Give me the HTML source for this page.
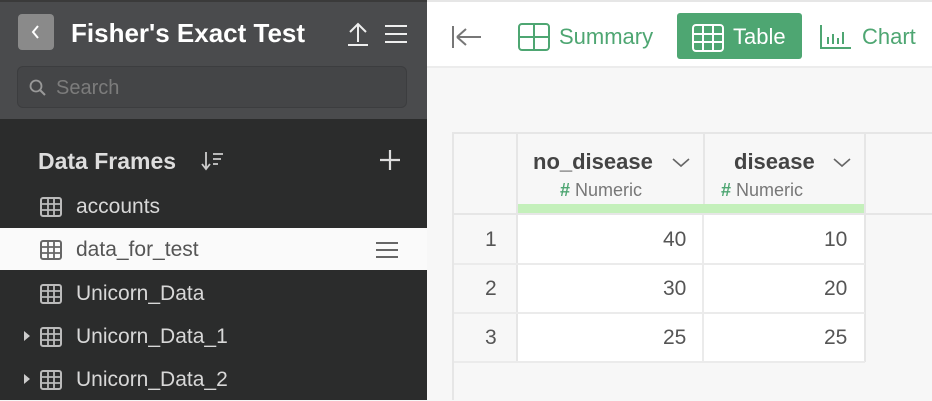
<!DOCTYPE html><html><head><style>
*{margin:0;padding:0;box-sizing:border-box}
body{width:932px;height:400px;overflow:hidden;font-family:"Liberation Sans",sans-serif;background:#f7f7f7;position:relative}
.sb{position:absolute;left:0;top:0;width:427px;height:400px;background:#2b2c2c}
.hd{position:absolute;left:0;top:0;width:427px;height:119px;background:#4a4b4d;border-top:2px solid #3a3a3a}
.abs{position:absolute}
.row{position:absolute;left:0;width:427px;height:43px;color:#d8d8d8;font-size:21px}
.row .t{position:absolute;left:76px;top:10px}
.row svg{position:absolute;left:40px;top:12px}
.tri{position:absolute;left:24px;top:16px;width:0;height:0;border-left:6px solid #ccc;border-top:5px solid transparent;border-bottom:5px solid transparent}
.tb{position:absolute;left:427px;top:0;width:505px;height:68px;background:#fff;border-bottom:2px solid #ececec;border-top:2px solid #e6e6e6}
.g{color:#4ea672}
</style></head><body>
<div class="sb">
<div class="hd">
 <div class="abs" style="left:18px;top:12px;width:36px;height:36px;background:#8a8a8a;border-radius:4px"><svg width="36" height="36"><path d="M20 12l-5 6 5 6" stroke="#fff" stroke-width="2" fill="none"/></svg></div>
 <div class="abs" style="left:71px;top:16px;color:#fff;font-size:26px;font-weight:bold">Fisher's Exact Test</div>
 <svg class="abs" style="left:346px;top:20px" width="24" height="26"><path d="M12 2v18M4 10l8-8 8 8M2 23h20" stroke="#eee" stroke-width="2" fill="none"/></svg>
 <svg class="abs" style="left:385px;top:22px" width="22" height="22"><path d="M0 2h22M0 10h22M0 18h22" stroke="#eee" stroke-width="2"/></svg>
 <div class="abs" style="left:17px;top:64px;width:390px;height:42px;background:#444547;border:1px solid #3c3d3f;border-radius:6px"></div>
 <svg class="abs" style="left:29px;top:77px" width="18" height="18"><circle cx="7" cy="7" r="5.5" stroke="#999" stroke-width="1.8" fill="none"/><path d="M11 11l5 5" stroke="#999" stroke-width="2"/></svg>
 <div class="abs" style="left:56px;top:75px;color:#7c7c7c;font-size:20px">Search</div>
</div>
<div class="abs" style="left:38px;top:148px;color:#ddd;font-size:23px;font-weight:bold">Data Frames</div>
<svg class="abs" style="left:200px;top:150px" width="26" height="22"><path d="M6 2v16M2 14l4 5 4-5M13 4h10M13 9h8M13 14h5" stroke="#ccc" stroke-width="1.8" fill="none"/></svg>
<svg class="abs" style="left:379px;top:149px" width="22" height="22"><path d="M11 1v20M1 11h20" stroke="#ddd" stroke-width="2.2"/></svg>
<div class="row" style="top:185px"><svg width="22" height="20"><rect x="1" y="1" width="20" height="18" rx="2" stroke="#bbb" fill="none" stroke-width="2"/><path d="M1 7h20M1 13h20M8 1v18M14 1v18" stroke="#bbb" stroke-width="1.8"/></svg><span class="t">accounts</span></div>
<div class="row" style="top:228px;background:#fafafa;color:#555;height:42px"><svg width="22" height="20"><rect x="1" y="1" width="20" height="18" rx="2" stroke="#666" fill="none" stroke-width="2"/><path d="M1 7h20M1 13h20M8 1v18M14 1v18" stroke="#666" stroke-width="1.8"/></svg><span class="t">data_for_test</span><svg style="left:376px;top:13px" width="22" height="18"><path d="M0 2h22M0 9h22M0 16h22" stroke="#666" stroke-width="2"/></svg></div>
<div class="row" style="top:272px"><svg width="22" height="20"><rect x="1" y="1" width="20" height="18" rx="2" stroke="#bbb" fill="none" stroke-width="2"/><path d="M1 7h20M1 13h20M8 1v18M14 1v18" stroke="#bbb" stroke-width="1.8"/></svg><span class="t">Unicorn_Data</span></div>
<div class="row" style="top:315px"><div class="tri"></div><svg width="22" height="20"><rect x="1" y="1" width="20" height="18" rx="2" stroke="#bbb" fill="none" stroke-width="2"/><path d="M1 7h20M1 13h20M8 1v18M14 1v18" stroke="#bbb" stroke-width="1.8"/></svg><span class="t">Unicorn_Data_1</span></div>
<div class="row" style="top:358px"><div class="tri"></div><svg width="22" height="20"><rect x="1" y="1" width="20" height="18" rx="2" stroke="#bbb" fill="none" stroke-width="2"/><path d="M1 7h20M1 13h20M8 1v18M14 1v18" stroke="#bbb" stroke-width="1.8"/></svg><span class="t">Unicorn_Data_2</span></div>
</div>
<div class="tb">
 <svg class="abs" style="left:24px;top:22px" width="32" height="26"><path d="M2 2v22M6 13h24M6 13l9-8M6 13l9 8" stroke="#777" stroke-width="2" fill="none"/></svg>
 <svg class="abs" style="left:91px;top:21px" width="32" height="28"><rect x="1" y="1" width="30" height="26" rx="3" stroke="#4ea672" stroke-width="2" fill="none"/><path d="M1 14h30M16 1v26" stroke="#4ea672" stroke-width="2"/></svg>
 <div class="abs g" style="left:132px;top:22px;font-size:22px">Summary</div>
 <div class="abs" style="left:250px;top:11px;width:125px;height:46px;background:#4ea672;border-radius:3px"></div>
 <svg class="abs" style="left:265px;top:22px" width="32" height="28"><rect x="1" y="1" width="30" height="26" rx="3" stroke="#fff" stroke-width="2" fill="none"/><path d="M1 10h30M1 18h30M11 1v26M21 1v26" stroke="#fff" stroke-width="2"/></svg>
 <div class="abs" style="left:306px;top:22px;font-size:22px;color:#fff">Table</div>
 <svg class="abs" style="left:393px;top:22px" width="32" height="26"><path d="M1 1v23h30M8 20v-7M13 20v-10M18 20v-6M23 20v-12" stroke="#4ea672" stroke-width="2" fill="none"/></svg>
 <div class="abs g" style="left:435px;top:22px;font-size:22px">Chart</div>
</div>
<div class="abs" style="left:452px;top:132px;width:2px;height:268px;background:#e6e6e6"></div>
<div class="abs" style="left:452px;top:132px;width:480px;height:2px;background:#e6e6e6"></div>
<div class="abs" style="left:452px;top:213px;width:480px;height:2px;background:#e6e6e6"></div>
<div class="abs" style="left:516px;top:132px;width:2px;height:230px;background:#e6e6e6"></div>
<div class="abs" style="left:703px;top:132px;width:2px;height:230px;background:#e6e6e6"></div>
<div class="abs" style="left:864px;top:132px;width:2px;height:230px;background:#e6e6e6"></div>
<div class="abs" style="left:518px;top:204px;width:346px;height:9px;background:#c4f0bb"></div>
<div class="abs" style="left:533px;top:149px;font-size:22px;font-weight:bold;color:#444">no_disease</div>
<div class="abs" style="left:734px;top:149px;font-size:22px;font-weight:bold;color:#444">disease</div>
<svg class="abs" style="left:672px;top:158px" width="18" height="10"><path d="M1 1l8 7 8-7" stroke="#666" stroke-width="1.6" fill="none"/></svg>
<svg class="abs" style="left:833px;top:158px" width="18" height="10"><path d="M1 1l8 7 8-7" stroke="#666" stroke-width="1.6" fill="none"/></svg>
<div class="abs" style="left:560px;top:180px;font-size:18px;color:#777"><b class="g">#</b> Numeric</div>
<div class="abs" style="left:721px;top:180px;font-size:18px;color:#777"><b class="g">#</b> Numeric</div>
<div class="abs" style="left:518px;top:215px;width:346px;height:147px;background:#fff"></div>
<div class="abs" style="left:518px;top:215px;width:186px;height:147px;border-right:2px solid #ebebeb"></div>
<div class="abs" style="left:454px;top:263px;width:411px;height:2px;background:#ebebeb"></div>
<div class="abs" style="left:454px;top:312px;width:411px;height:2px;background:#ebebeb"></div>
<div class="abs" style="left:454px;top:361px;width:411px;height:2px;background:#ebebeb"></div>
<div class="abs" style="font-size:21px;color:#555;left:485px;top:228px">1</div>
<div class="abs" style="font-size:21px;color:#555;left:485px;top:277px">2</div>
<div class="abs" style="font-size:21px;color:#555;left:485px;top:326px">3</div>
<div class="abs" style="font-size:21px;color:#555;left:663px;top:228px">40</div>
<div class="abs" style="font-size:21px;color:#555;left:824px;top:228px">10</div>
<div class="abs" style="font-size:21px;color:#555;left:663px;top:277px">30</div>
<div class="abs" style="font-size:21px;color:#555;left:824px;top:277px">20</div>
<div class="abs" style="font-size:21px;color:#555;left:663px;top:326px">25</div>
<div class="abs" style="font-size:21px;color:#555;left:824px;top:326px">25</div>
</body></html>
